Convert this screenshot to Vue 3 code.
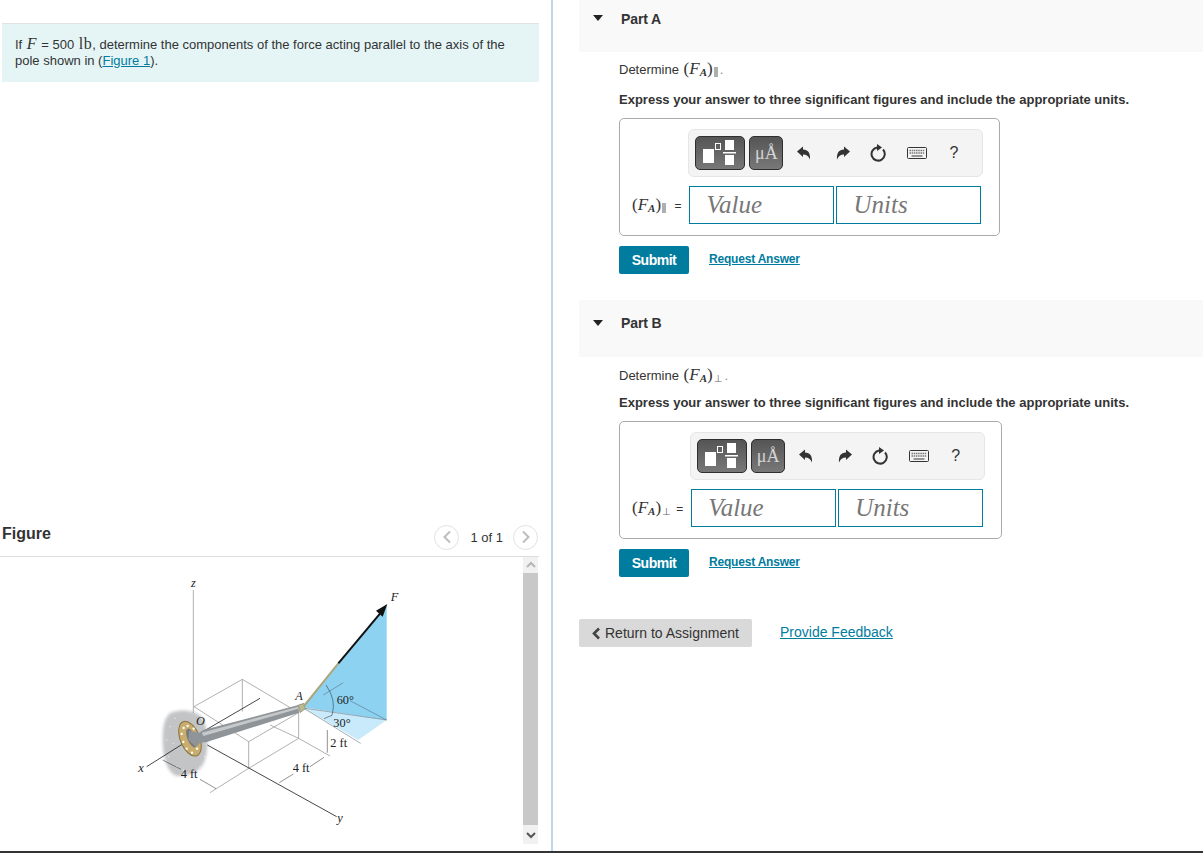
<script setup>
const parts = [
  { name: 'Part A', kind: 'par' },
  { name: 'Part B', kind: 'perp' }
]
const dots = [[203,468],[221,476],[234,492],[238,514],[231,536],[216,548],[200,536],[190,516],[185,492],[191,474]]
const specks = [[150,470],[160,520],[146,560],[170,590],[240,590],[165,445],[250,450],[255,560],[190,600],[140,510]]
</script>

<template>
  <div class="page">
    <aside class="left">
      <div class="intro">
        <p>If <i class="m f">F</i> = 500 <span class="m lb">lb</span>, determine the components of the force acting parallel to the axis of the pole shown in (<a>Figure 1</a>).</p>
      </div>
      <section class="figure">
        <header class="fig-head">
          <h2>Figure</h2>
          <nav class="pager">
            <span class="circle"><svg width="10" height="14" viewBox="0 0 10 14"><path d="M8 1.500 2.500 7 8 12.500" fill="none" stroke="#bdbdbd" stroke-width="2"/></svg></span>
            <span class="count">1 of 1</span>
            <span class="circle"><svg width="10" height="14" viewBox="0 0 10 14"><path d="M2 1.500 7.500 7 2 12.500" fill="none" stroke="#bdbdbd" stroke-width="2"/></svg></span>
          </nav>
        </header>
        <div class="fig-body">
          <div class="fig-view">
            <svg class="drawing" width="290" height="270" viewBox="0 0 870 810">
              <defs><filter id="soft" x="-20%" y="-20%" width="140%" height="140%"><feGaussianBlur stdDeviation="5"/></filter></defs>
              <path d="M150 430c30-15 70-10 95 10 20 30 22 90 10 130-10 35-50 50-85 48-30-10-42-60-42-110 0-35 5-65 22-78z" fill="#c3c4c6" filter="url(#soft)"/>
              <circle v-for="s in specks" :key="s[0] + '_' + s[1]" :cx="s[0]" :cy="s[1]" r="2" fill="#fff" opacity=".7"/>
              <path d="M550 412 800 105V450Z" fill="#8dd3f1"/>
              <path d="M550 414 800 450 715 510Z" fill="#c9eafa"/>
              <g fill="none" stroke="#8a8a8a" stroke-width="2">
                <path d="M220 60V430"/>
                <path d="M222 410 367 328 536 428 386 515 222 410M386 515V595L536 505V428M367 328V425M536 505 630 558M386 595 270 668M450 465 536 505"/>
              </g>
              <g fill="none" stroke="#4d5f6b" stroke-width="1.500">
                <path d="M550 414 800 450 690 392M610 375 670 338M550 414 722 520"/>
              </g>
              <g fill="none" stroke="#222" stroke-width="2.500">
                <path d="M80 590 215 505M240 490 420 385M262 525 650 740"/>
                <path d="M128 570 183 598M240 628 288 656M478 638 520 612M570 590 612 562M622 480V548M618 345Q650 390 636 436M612 446 636 436" stroke-width="1.500"/>
              </g>
              <ellipse cx="210" cy="506" rx="29" ry="55" transform="rotate(-22 210 506)" fill="#c9ad6d" stroke="#8a7440" stroke-width="3"/>
              <ellipse cx="214" cy="504" rx="12" ry="30" transform="rotate(-22 214 504)" fill="#77787a"/>
              <circle v-for="d in dots" :key="d[0] + '-' + d[1]" :cx="d[0]" :cy="d[1]" r="3.500" fill="#fff"/>
              <path d="M207 482 238 488 250 480 535 405 537 428 260 516 240 518 228 532 205 510Z" fill="#8f9498"/>
              <path d="M245 488 533 410 535 416 250 498Z" fill="#c4c8cb"/>
              <path d="M535 405 552 400 556 416 540 428Z" fill="#bcb98d" stroke="#666" stroke-width="1.500"/>
              <path d="M552 408 655 280" stroke="#aaa67f" stroke-width="6"/>
              <path d="M655 280 785 125" stroke="#111" stroke-width="6"/>
              <path d="M802 102 768 122 788 140Z" fill="#111"/>
              <g class="fig-t">
                <text x="213" y="50" font-style="italic">z</text>
                <text x="812" y="92" font-style="italic">F</text>
                <text x="526" y="390" font-style="italic">A</text>
                <text x="228" y="466" font-style="italic">O</text>
                <text x="55" y="606" font-style="italic">x</text>
                <text x="652" y="755" font-style="italic">y</text>
                <text x="650" y="402">60°</text>
                <text x="640" y="472">30°</text>
                <text x="631" y="532">2 ft</text>
                <text x="518" y="606">4 ft</text>
                <text x="182" y="624">4 ft</text>
              </g>
            </svg>
          </div>
          <div class="scrollbar">
            <div class="sb-btn top"><svg width="10" height="8" viewBox="0 0 10 8"><path d="M1 6 5 2 9 6" fill="none" stroke="#b5b5b5" stroke-width="2"/></svg></div>
            <div class="sb-thumb"></div>
            <div class="sb-btn bottom"><svg width="10" height="8" viewBox="0 0 10 8"><path d="M1 2 5 6 9 2" fill="none" stroke="#555" stroke-width="2"/></svg></div>
          </div>
        </div>
      </section>
    </aside>

    <main class="right">
      <section v-for="p in parts" :key="p.name" class="part">
        <header class="part-bar">
          <span class="caret"></span>
          <span class="part-name">{{ p.name }}</span>
        </header>
        <div class="part-body">
          <p class="determine">Determine <span class="math">(<i>F<sub>A</sub></i>)<span v-if="p.kind === 'par'" class="par"></span><span v-else class="perp">⊥</span></span><span class="dot">.</span></p>
          <p class="express">Express your answer to three significant figures and include the appropriate units.</p>
          <div class="answer">
            <div class="toolbar">
              <button class="tb-btn wide" aria-label="templates">
                <svg width="48" height="32" viewBox="0 0 48 32">
                  <rect x="7" y="12" width="11" height="14" fill="#fff"/>
                  <rect x="19.500" y="6.500" width="5" height="6" fill="none" stroke="#fff"/>
                  <rect x="29" y="3" width="9" height="10" fill="#fff"/>
                  <rect x="27" y="15" width="13" height="1.500" fill="#fff"/>
                  <rect x="29" y="18" width="9" height="10" fill="#fff"/>
                </svg>
              </button>
              <button class="tb-btn unit">μÅ</button>
              <div class="tb-icons">
                <svg class="i1" width="14" height="14" viewBox="0 0 14 14"><path d="M0 5.500 6 .5V3.500C11 3.500 13.500 7 13 13.500 11.500 10 9.500 8.500 6 8.500V11Z" fill="#333"/></svg>
                <svg class="i2" width="14" height="14" viewBox="0 0 14 14"><path d="M14 5.500 8 .5V3.500C3 3.500 .5 7 1 13.500 2.500 10 4.500 8.500 8 8.500V11Z" fill="#333"/></svg>
                <svg class="i3" width="18" height="18" viewBox="0 0 18 18"><path d="M14 5.500A6.600 6.600 0 1 1 8 3.500" fill="none" stroke="#333" stroke-width="2"/><path d="M8 0 13 3.500 8 7Z" fill="#333"/></svg>
                <svg class="i4" width="20" height="12" viewBox="0 0 20 12"><rect x=".5" y=".5" width="19" height="11" rx="1" fill="#f4f4f4" stroke="#333"/><path d="M2.500 3.500H17.500M2.500 6H17.500" stroke="#777" stroke-width="1.500" stroke-dasharray="1.500 .7"/><path d="M4.500 9H15.500" stroke="#555" stroke-width="1.200"/></svg>
                <span class="help">?</span>
              </div>
            </div>
            <label class="eq"><span class="math">(<i>F<sub>A</sub></i>)<span v-if="p.kind === 'par'" class="par"></span><span v-else class="perp">⊥</span></span> <span class="equals">=</span></label>
            <div class="inputs">
              <div class="field">Value</div>
              <div class="field">Units</div>
            </div>
          </div>
          <div class="actions">
            <button class="submit">Submit</button>
            <a class="req">Request Answer</a>
          </div>
        </div>
      </section>
      <footer class="foot">
        <button class="back"><svg width="10" height="13" viewBox="0 0 10 13"><path d="M8 1.500 3 6.500 8 11.500" fill="none" stroke="#444" stroke-width="2.600"/></svg>Return to Assignment</button>
        <a class="feedback">Provide Feedback</a>
      </footer>
    </main>
  </div>
</template>

<style>
html, body { margin: 0; background: #fff; }
</style>

<style scoped>
.page { width: 1203px; height: 853px; display: flex; box-sizing: border-box; border-bottom: 2px solid #333; font-family: "Liberation Sans", Arial, sans-serif; color: #333; overflow: hidden; }
.left { width: 551px; flex: none; display: flex; flex-direction: column; }
.intro { margin: 23px 0 0 2px; width: 537px; height: 59px; box-sizing: border-box; background: #e5f5f6; border-top: 1px solid #dfe3e3; padding: 13px 13px 0; }
.intro p { margin: 0; font-size: 13px; line-height: 16px; width: 500px; }
.m { font-family: "Liberation Serif", serif; font-size: 16px; line-height: 0; }
.f { margin: 0 1px 0 1px; }
.lb { margin-left: 1px; letter-spacing: .5px; }
.intro a { color: #007c9e; text-decoration: underline; }
.figure { margin-top: 435px; width: 539px; }
.fig-head { height: 39px; display: flex; align-items: center; justify-content: space-between; border-bottom: 1px solid #ddd; padding-right: 1px; }
.fig-head h2 { margin: 0 0 6px 2px; font-size: 16px; font-weight: 700; line-height: 20px; }
.pager { display: flex; align-items: center; margin-top: 1px; }
.circle { width: 25px; height: 25px; box-sizing: border-box; border: 1px solid #e2e2e2; border-radius: 50%; display: flex; align-items: center; justify-content: center; }
.count { font-size: 13px; padding: 0 10px 0 11px; }
.fig-body { display: flex; height: 287px; }
.fig-view { width: 523px; flex: none; }
.drawing { display: block; margin: 13px 0 0 120px; }
.fig-t { font-family: "Liberation Serif", serif; font-size: 37px; fill: #222; }
.scrollbar { width: 15px; display: flex; flex-direction: column; background: #f1f1f1; }
.sb-btn { height: 16px; flex: none; display: flex; align-items: center; justify-content: center; background: #f1f1f1; }
.sb-btn.bottom { height: 19px; }
.sb-thumb { flex: 1; background: #c8c8c8; }

.right { flex: 1; border-left: 2px solid #c2d6e6; padding-left: 26px; }
.part-bar { height: 52px; background: #f9f9f9; display: flex; align-items: flex-start; }
.part + .part .part-bar { height: 57px; }
.caret { width: 0; height: 0; border-left: 5.500px solid transparent; border-right: 5.500px solid transparent; border-top: 6px solid #222; margin: 15px 17px 0 14px; }
.part + .part .caret { margin-top: 20px; }
.part-name { font-size: 14px; font-weight: 700; line-height: 16px; margin-top: 11px; margin-left: 1px; letter-spacing: -.1px; }
.part + .part .part-name { margin-top: 15px; }
.part-body { padding: 7px 0 0 40px; height: 248px; box-sizing: border-box; }
.part + .part .part-body { padding-top: 8px; height: 262px; }
.determine { margin: 0; font-size: 13px; line-height: 20px; height: 20px; white-space: nowrap; }
.math { font-family: "Liberation Serif", serif; font-size: 17px; margin-left: 1px; }
.math sub { font-size: 11px; font-weight: 700; line-height: 0; vertical-align: -2px; }
.par { display: inline-block; width: 4px; height: 10px; background: #aeaeae; vertical-align: -3px; margin-left: 1px; }
.perp { font-family: "DejaVu Sans", sans-serif; font-size: 10px; color: #666; vertical-align: -2px; margin-left: 1px; }
.dot { color: #888; margin-left: 2px; }
.express { margin: 12px 0 0; font-size: 13px; font-weight: 700; line-height: 18px; }
.part + .part .express { margin-top: 9px; }
.answer { margin-top: 9px; display: inline-grid; grid-template-columns: auto auto; border: 1px solid #aaa; border-radius: 5px; padding: 10px 18px 11px 12px; column-gap: 8px; row-gap: 9px; align-items: center; }
.toolbar { grid-column: 2; margin: 0 -2px 0 -1px; height: 48px; box-sizing: border-box; background: #f4f4f4; border: 1px solid #e6e6e6; border-radius: 6px; display: flex; align-items: center; padding-left: 6px; gap: 4px; }
.tb-btn { height: 34px; box-sizing: border-box; padding: 0; border: 1px solid #2e2e2e; border-radius: 5px; background: linear-gradient(#555, #787878); display: flex; align-items: center; justify-content: center; }
.tb-btn.wide { width: 50px; }
.tb-btn.unit { width: 34px; color: #d5d5d5; font-family: "Liberation Serif", serif; font-size: 18px; }
.tb-icons { display: flex; align-items: center; position: relative; height: 100%; }
.i1 { margin-left: 10px; }
.i2 { margin-left: 25px; }
.i3 { margin-left: 19px; }
.i4 { margin-left: 20px; }
.help { margin-left: 22px; font-size: 16px; width: 10px; }
.eq { grid-column: 1; grid-row: 2; white-space: nowrap; font-size: 12px; }
.eq .math { margin-left: 0; }
.eq .par { margin-right: 3px; }
.equals { margin-left: 2px; }
.inputs { grid-column: 2; display: flex; gap: 2px; }
.field { width: 145px; height: 38px; box-sizing: border-box; border: 1px solid #007c9e; padding-left: 16px; font: italic 25px/36px "Liberation Serif", serif; color: #777; }
.actions { margin-top: 10px; display: flex; align-items: flex-start; }
.submit { width: 70px; height: 28px; border: 0; border-radius: 2px; background: #007c9e; color: #fff; font: 700 14px "Liberation Sans", sans-serif; letter-spacing: -.5px; padding: 0; }
.req { margin: 5px 0 0 20px; font-size: 12px; font-weight: 700; line-height: 16px; color: #007c9e; text-decoration: underline; letter-spacing: -.2px; }
.foot { display: flex; align-items: flex-start; gap: 28px; }
.back { width: 173px; height: 28px; border: 0; border-radius: 2px; background: #d9d9d9; color: #333; font: 14px "Liberation Sans", sans-serif; padding: 0 0 0 12px; display: flex; align-items: center; gap: 4px; }
.feedback { font-size: 14px; line-height: 28px; margin-top: -1px; color: #007c9e; text-decoration: underline; }
</style>
